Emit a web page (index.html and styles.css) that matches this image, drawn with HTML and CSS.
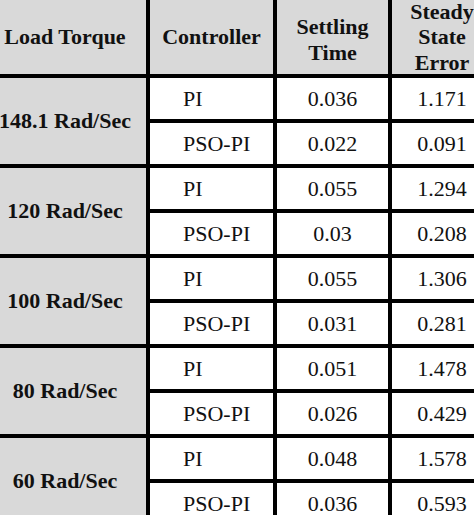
FILE: index.html
```html
<!DOCTYPE html>
<html>
<head>
<meta charset="utf-8">
<link rel="stylesheet" href="styles.css">
</head>
<body>
<div class="table">
  <div class="cell head">Load Torque</div>
  <div class="cell head">Controller</div>
  <div class="cell head head-two">Settling<br>Time</div>
  <div class="cell head">Steady<br>State<br>Error</div>

  <div class="cell load">148.1 Rad/Sec</div>
  <div class="cell ctrl">PI</div>
  <div class="cell num">0.036</div>
  <div class="cell num">1.171</div>
  <div class="cell ctrl">PSO-PI</div>
  <div class="cell num">0.022</div>
  <div class="cell num">0.091</div>

  <div class="cell load">120 Rad/Sec</div>
  <div class="cell ctrl">PI</div>
  <div class="cell num">0.055</div>
  <div class="cell num">1.294</div>
  <div class="cell ctrl">PSO-PI</div>
  <div class="cell num">0.03</div>
  <div class="cell num">0.208</div>

  <div class="cell load">100 Rad/Sec</div>
  <div class="cell ctrl">PI</div>
  <div class="cell num">0.055</div>
  <div class="cell num">1.306</div>
  <div class="cell ctrl">PSO-PI</div>
  <div class="cell num">0.031</div>
  <div class="cell num">0.281</div>

  <div class="cell load">80 Rad/Sec</div>
  <div class="cell ctrl">PI</div>
  <div class="cell num">0.051</div>
  <div class="cell num">1.478</div>
  <div class="cell ctrl">PSO-PI</div>
  <div class="cell num">0.026</div>
  <div class="cell num">0.429</div>

  <div class="cell load">60 Rad/Sec</div>
  <div class="cell ctrl">PI</div>
  <div class="cell num">0.048</div>
  <div class="cell num">1.578</div>
  <div class="cell ctrl">PSO-PI</div>
  <div class="cell num">0.036</div>
  <div class="cell num">0.593</div>
</div>
</body>
</html>
```
FILE: styles.css
```css
html, body {
  margin: 0;
  padding: 0;
  background: #ffffff;
  overflow: hidden;
}
body {
  width: 474px;
  height: 515px;
}
.table {
  display: grid;
  grid-template-columns: 162px 123px 111px 100px;
  grid-template-rows: 74px repeat(10, 41px);
  gap: 4px;
  padding: 4px;
  background: #000;
  margin-left: -20px;
  margin-top: -4px;
  width: max-content;
  font-family: "Liberation Serif", "Times New Roman", serif;
  font-size: 22px;
  color: #111;
}
.cell {
  display: flex;
  align-items: center;
  justify-content: center;
  background: #fff;
  text-align: center;
}
.head {
  background: #d9d9d9;
  font-weight: bold;
  line-height: 25.5px;
}
.head-two {
  padding-top: 5px;
}
.load {
  background: #d9d9d9;
  font-weight: bold;
  grid-row: span 2;
  grid-column: 1;
}
.ctrl {
  justify-content: flex-start;
  padding-left: 33px;
}
```
